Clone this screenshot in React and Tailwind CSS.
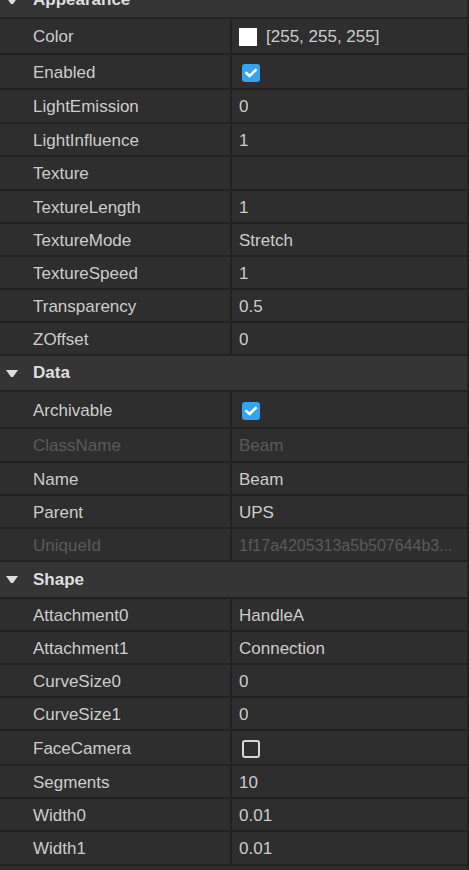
const rows = [
  { type: 'header', label: 'Appearance', h: 'h-[34px]', first: true },
  { label: 'Color', h: 'h-[34px]', kind: 'color', value: '[255, 255, 255]' },
  { label: 'Enabled', h: 'h-[33px]', kind: 'check', checked: true },
  { label: 'LightEmission', h: 'h-[32px]', value: '0' },
  { label: 'LightInfluence', h: 'h-[31px]', value: '1' },
  { label: 'Texture', h: 'h-[32px]', value: '' },
  { label: 'TextureLength', h: 'h-[31px]', value: '1' },
  { label: 'TextureMode', h: 'h-[31px]', value: 'Stretch' },
  { label: 'TextureSpeed', h: 'h-[31px]', value: '1' },
  { label: 'Transparency', h: 'h-[31px]', value: '0.5' },
  { label: 'ZOffset', h: 'h-[31px]', value: '0' },
  { type: 'header', label: 'Data', h: 'h-[34px]' },
  { label: 'Archivable', h: 'h-[35px]', kind: 'check', checked: true },
  { label: 'ClassName', h: 'h-[32px]', value: 'Beam', disabled: true },
  { label: 'Name', h: 'h-[31px]', value: 'Beam' },
  { label: 'Parent', h: 'h-[31px]', value: 'UPS' },
  { label: 'UniqueId', h: 'h-[31px]', value: '1f17a4205313a5b507644b3...', disabled: true, small: true },
  { type: 'header', label: 'Shape', h: 'h-[35px]' },
  { label: 'Attachment0', h: 'h-[31px]', value: 'HandleA' },
  { label: 'Attachment1', h: 'h-[31px]', value: 'Connection' },
  { label: 'CurveSize0', h: 'h-[31px]', value: '0' },
  { label: 'CurveSize1', h: 'h-[31px]', value: '0' },
  { label: 'FaceCamera', h: 'h-[33px]', kind: 'check', checked: false },
  { label: 'Segments', h: 'h-[31px]', value: '10' },
  { label: 'Width0', h: 'h-[31px]', value: '0.01' },
  { label: 'Width1', h: 'h-[32px]', value: '0.01' },
];

function Caret() {
  return (
    <svg width="12" height="7" viewBox="0 0 12 7" className="ml-[6px] mr-[15px] shrink-0">
      <polygon points="0,0 12,0 7,7 5,7" fill="#dcdcdc" />
    </svg>
  );
}

function CheckBox({ checked }) {
  if (checked) {
    return (
      <svg width="18" height="18" viewBox="0 0 18 18" className="ml-[3px]">
        <rect x="0" y="0" width="18" height="18" rx="3" fill="#35a2f2" />
        <path d="M4.5 9.2 L7.6 12 L13.6 6.2" stroke="#fff" strokeWidth="2.6" fill="none" strokeLinecap="square" />
      </svg>
    );
  }
  return (
    <svg width="18" height="18" viewBox="0 0 18 18" className="ml-[3px]">
      <rect x="1" y="1" width="16" height="16" rx="2" fill="none" stroke="#d6d6d6" strokeWidth="2" />
    </svg>
  );
}

function Value({ row }) {
  if (row.kind === 'check') return <CheckBox checked={row.checked} />;
  if (row.kind === 'color') {
    return (
      <div className="flex items-center gap-[9px]">
        <span className="w-[18px] h-[18px] bg-white" />
        <span>{row.value}</span>
      </div>
    );
  }
  return <span className={`truncate ${row.small ? 'text-[16px]' : ''}`}>{row.value}</span>;
}

export default function App() {
  return (
    <div
      className="min-h-screen w-full bg-[#2e2e2e] overflow-hidden border-r-2 border-[#222222] text-[17px] text-[#cccccc]"
      style={{ fontFamily: '"Liberation Sans", Arial, sans-serif' }}
    >
      {rows.map((row) =>
        row.type === 'header' ? (
          <div
            key={row.label}
            className={`${row.h} ${row.first ? '-mt-[17px]' : ''} box-content flex items-center bg-[#353535] border-b-2 border-[#222222] font-bold text-[#dedede]`}
          >
            <Caret />
            <span>{row.label}</span>
          </div>
        ) : (
          <div key={row.label} className={`${row.h} flex box-content border-b-2 border-[#222222]`}>
            <div
              className={`w-[232px] shrink-0 flex items-center pl-[33px] pt-[2px] border-r-2 border-[#222222] ${
                row.disabled ? 'text-[#5a5a5a]' : ''
              }`}
            >
              {row.label}
            </div>
            <div
              className={`flex-1 min-w-0 flex items-center pl-[7px] pr-1 pt-[2px] ${row.disabled ? 'text-[#5a5a5a]' : ''}`}
            >
              <Value row={row} />
            </div>
          </div>
        )
      )}
    </div>
  );
}
